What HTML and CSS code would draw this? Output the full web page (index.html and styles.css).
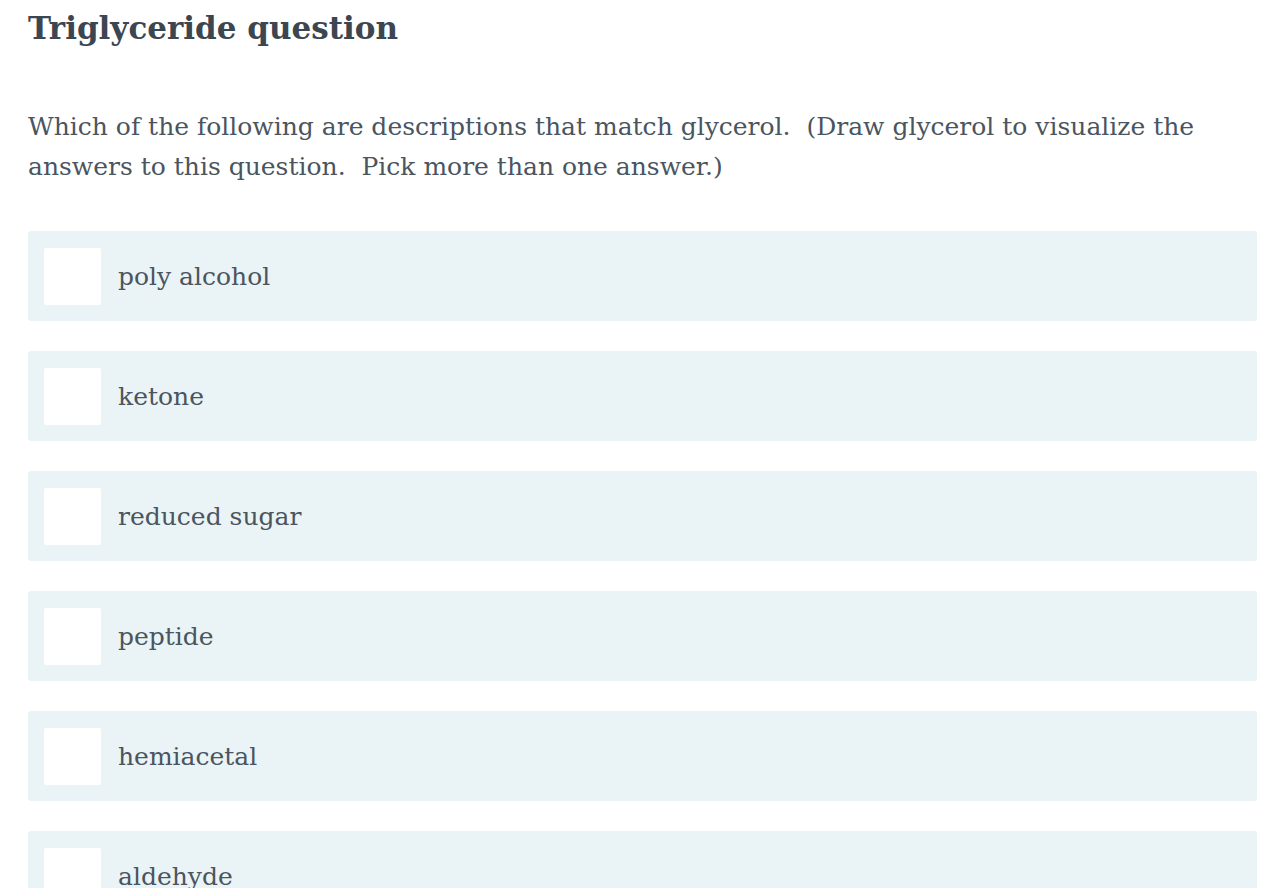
FILE: index.html
```html
<!DOCTYPE html>
<html>
<head>
<meta charset="utf-8">
<link rel="stylesheet" href="styles.css">
</head>
<body>
<main class="page">
  <h1 class="title">Triglyceride question</h1>
  <p class="prompt">Which of the following are descriptions that match glycerol.&nbsp; (Draw glycerol to visualize the answers to this question.&nbsp; Pick more than one answer.)</p>
  <ul class="options">
    <li class="option"><span class="box"></span><span class="label">poly alcohol</span></li>
    <li class="option"><span class="box"></span><span class="label">ketone</span></li>
    <li class="option"><span class="box"></span><span class="label">reduced sugar</span></li>
    <li class="option"><span class="box"></span><span class="label">peptide</span></li>
    <li class="option"><span class="box"></span><span class="label">hemiacetal</span></li>
    <li class="option"><span class="box"></span><span class="label">aldehyde</span></li>
  </ul>
</main>
</body>
</html>
```
FILE: styles.css
```css
html, body {
  margin: 0;
  padding: 0;
  background: #ffffff;
}
body {
  font-family: "DejaVu Serif", "Liberation Serif", serif;
  color: #3c4852;
}
.page {
  padding: 0 10px 0 28px;
}
.title {
  margin: 0;
  padding-top: 7px;
  font-size: 31px;
  line-height: 42px;
  font-weight: bold;
  color: #3b4651;
}
.prompt {
  margin: 58px 0 0 0;
  font-size: 25px;
  line-height: 40px;
  color: #4a5560;
}
.options {
  list-style: none;
  margin: 44px 0 0 0;
  padding: 0;
  display: flex;
  flex-direction: column;
  gap: 30px;
}
.option {
  height: 90px;
  background: #eaf3f5;
  border-radius: 3px;
  display: flex;
  align-items: center;
  padding-left: 16px;
}
.box {
  width: 57px;
  height: 57px;
  background: #ffffff;
  border-radius: 2px;
  flex: none;
}
.label {
  margin-left: 17px;
  font-size: 25px;
  color: #4a5560;
}
```
